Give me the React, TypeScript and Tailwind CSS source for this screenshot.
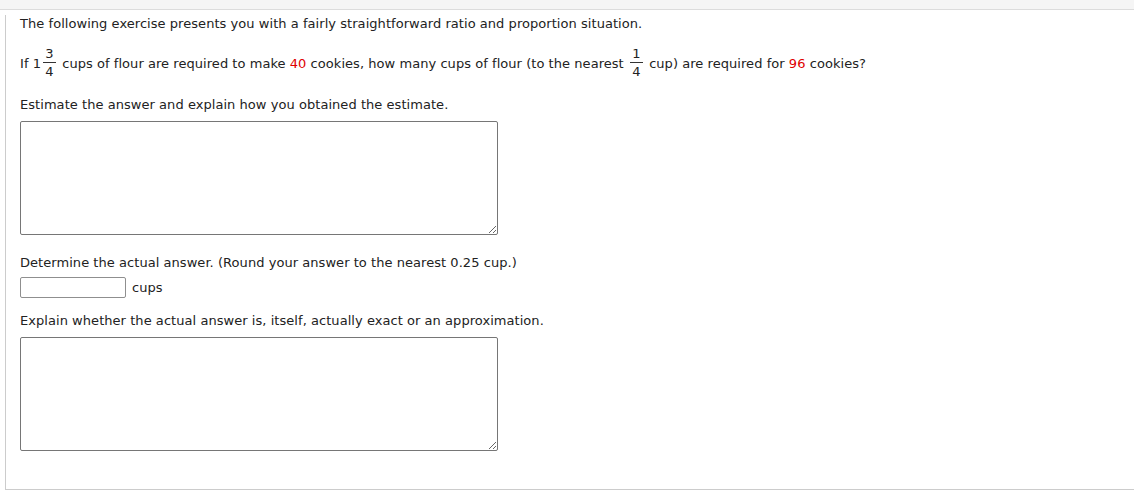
import React from 'react';

const Frac = ({ n, d }: { n: string; d: string }) => (
    <span className="mx-[2px] inline-flex w-[13px] flex-col items-center align-middle">
        <span className="text-[13px] leading-[15px]">{n}</span>
        <span className="mt-[1px] h-px w-full bg-[#333]"></span>
        <span className="text-[13px] leading-[17px]">{d}</span>
    </span>
);

const App = () => {
    return (
        <div className="min-h-[493px] bg-white font-['DejaVu_Sans',Verdana,sans-serif] text-[13px] tracking-[0.05px] text-[#222]">
            <div className="h-[10px] border-b border-[#dcdcdc] bg-[#f5f5f5]"></div>
            <div className="ml-[5px] border-b border-l border-[#cccccc] pb-[38px] pl-[14px]">
                <div className="mt-[5px] h-4 leading-[18px]">The following exercise presents you with a fairly straightforward ratio and proportion situation.</div>

                <div className="mt-4 flex h-8 items-center leading-4">
                    <span className="mt-[1px]">If 1</span>
                    <Frac n="3" d="4" />
                    <span className="mt-[1px] whitespace-pre"> cups of flour are required to make </span>
                    <span className="mt-[1px] text-[#e00000]">40</span>
                    <span className="mt-[1px] whitespace-pre"> cookies, how many cups of flour (to the nearest </span>
                    <Frac n="1" d="4" />
                    <span className="mt-[1px] whitespace-pre"> cup) are required for </span>
                    <span className="mt-[1px] text-[#e00000]">96</span>
                    <span className="mt-[1px] whitespace-pre"> cookies?</span>
                </div>

                <div className="mt-[17px] h-4 leading-[18px]">Estimate the answer and explain how you obtained the estimate.</div>
                <textarea className="mt-[9px] block h-[114px] w-[478px] rounded-[2px] border border-[#767676] bg-white"></textarea>

                <div className="mt-[19px] h-4 leading-[18px]">Determine the actual answer. (Round your answer to the nearest 0.25 cup.)</div>
                <div className="mt-[7px] flex h-[21px] items-center">
                    <input type="text" className="h-[21px] w-[106px] rounded-[2px] border border-[#8f8f8f] bg-white" />
                    <span className="ml-[6px] mt-[1px]">cups</span>
                </div>

                <div className="mt-[14px] h-4 leading-[18px]">Explain whether the actual answer is, itself, actually exact or an approximation.</div>
                <textarea className="mt-[9px] block h-[114px] w-[478px] rounded-[2px] border border-[#767676] bg-white"></textarea>
            </div>
        </div>
    );
};

export default App;
